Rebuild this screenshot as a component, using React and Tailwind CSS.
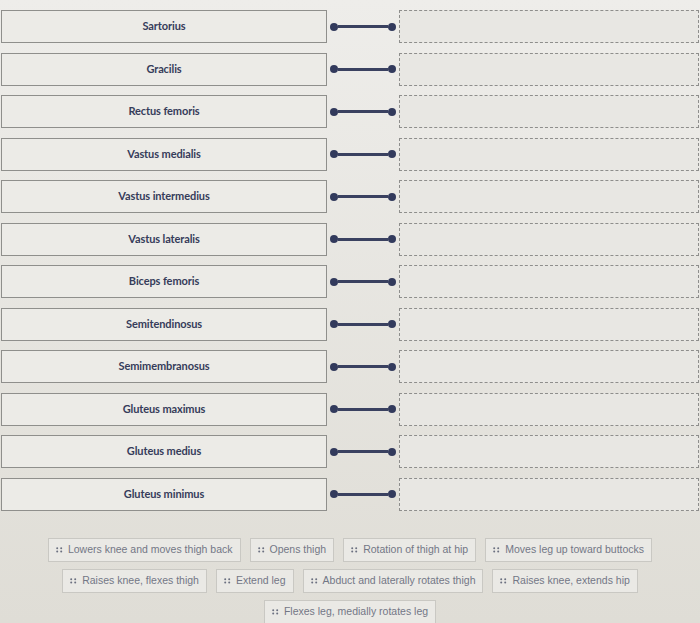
import React from 'react';

const muscles = [
  'Sartorius',
  'Gracilis',
  'Rectus femoris',
  'Vastus medialis',
  'Vastus intermedius',
  'Vastus lateralis',
  'Biceps femoris',
  'Semitendinosus',
  'Semimembranosus',
  'Gluteus maximus',
  'Gluteus medius',
  'Gluteus minimus',
];

const answerRows = [
  ['Lowers knee and moves thigh back', 'Opens thigh', 'Rotation of thigh at hip', 'Moves leg up toward buttocks'],
  ['Raises knee, flexes thigh', 'Extend leg', 'Abduct and laterally rotates thigh', 'Raises knee, extends hip'],
  ['Flexes leg, medially rotates leg'],
];

const Grip = () => (
  <svg width="7" height="6" viewBox="0 0 7 6" className="shrink-0 fill-[#6b7080]">
    <circle cx="1.2" cy="1.2" r="1" />
    <circle cx="5.2" cy="1.2" r="1" />
    <circle cx="1.2" cy="4.6" r="1" />
    <circle cx="5.2" cy="4.6" r="1" />
  </svg>
);

const MatchRow = ({ label }) => (
  <div className="flex items-center h-[33px]">
    {/* Term */}
    <div className="w-[326px] h-full shrink-0 flex items-center justify-center border border-[#8f8f8c] bg-[#ecebe7]">
      <span className="text-[11px] font-bold text-[#363c5a] tracking-[-0.1px]">{label}</span>
    </div>

    {/* Connector */}
    <div className="flex items-center w-[72px] shrink-0 px-[3px]">
      <span className="w-[8px] h-[8px] rounded-full bg-[#323a5c] shrink-0" />
      <span className="flex-1 h-[3px] bg-[#3a4160]" />
      <span className="w-[8px] h-[8px] rounded-full bg-[#323a5c] shrink-0" />
    </div>

    {/* Drop target */}
    <div className="w-[300px] h-full shrink-0 border border-dashed border-[#8e8e8c] bg-[#e8e7e3]" />
  </div>
);

export default function App() {
  return (
    <div className="w-[700px] h-[623px] overflow-hidden bg-gradient-to-b from-[#eeedea] to-[#dfddd6] font-['Lato',sans-serif]">
      <div className="flex flex-col gap-[9.5px] pt-[10px] pl-[1px]">
        {muscles.map((m) => (
          <MatchRow key={m} label={m} />
        ))}
      </div>

      {/* Answer bank */}
      <div className="flex flex-col items-center gap-[7px] mt-[27px] font-['Liberation_Sans',Arial,sans-serif]">
        {answerRows.map((row, i) => (
          <div key={i} className="flex gap-[9px]">
            {row.map((a) => (
              <div
                key={a}
                className="flex items-center gap-[5px] h-[24px] px-[7px] border border-[#c9c8c3] bg-[#eae9e5] text-[10.5px] text-[#737785] whitespace-nowrap"
              >
                <Grip />
                <span>{a}</span>
              </div>
            ))}
          </div>
        ))}
      </div>
    </div>
  );
}
